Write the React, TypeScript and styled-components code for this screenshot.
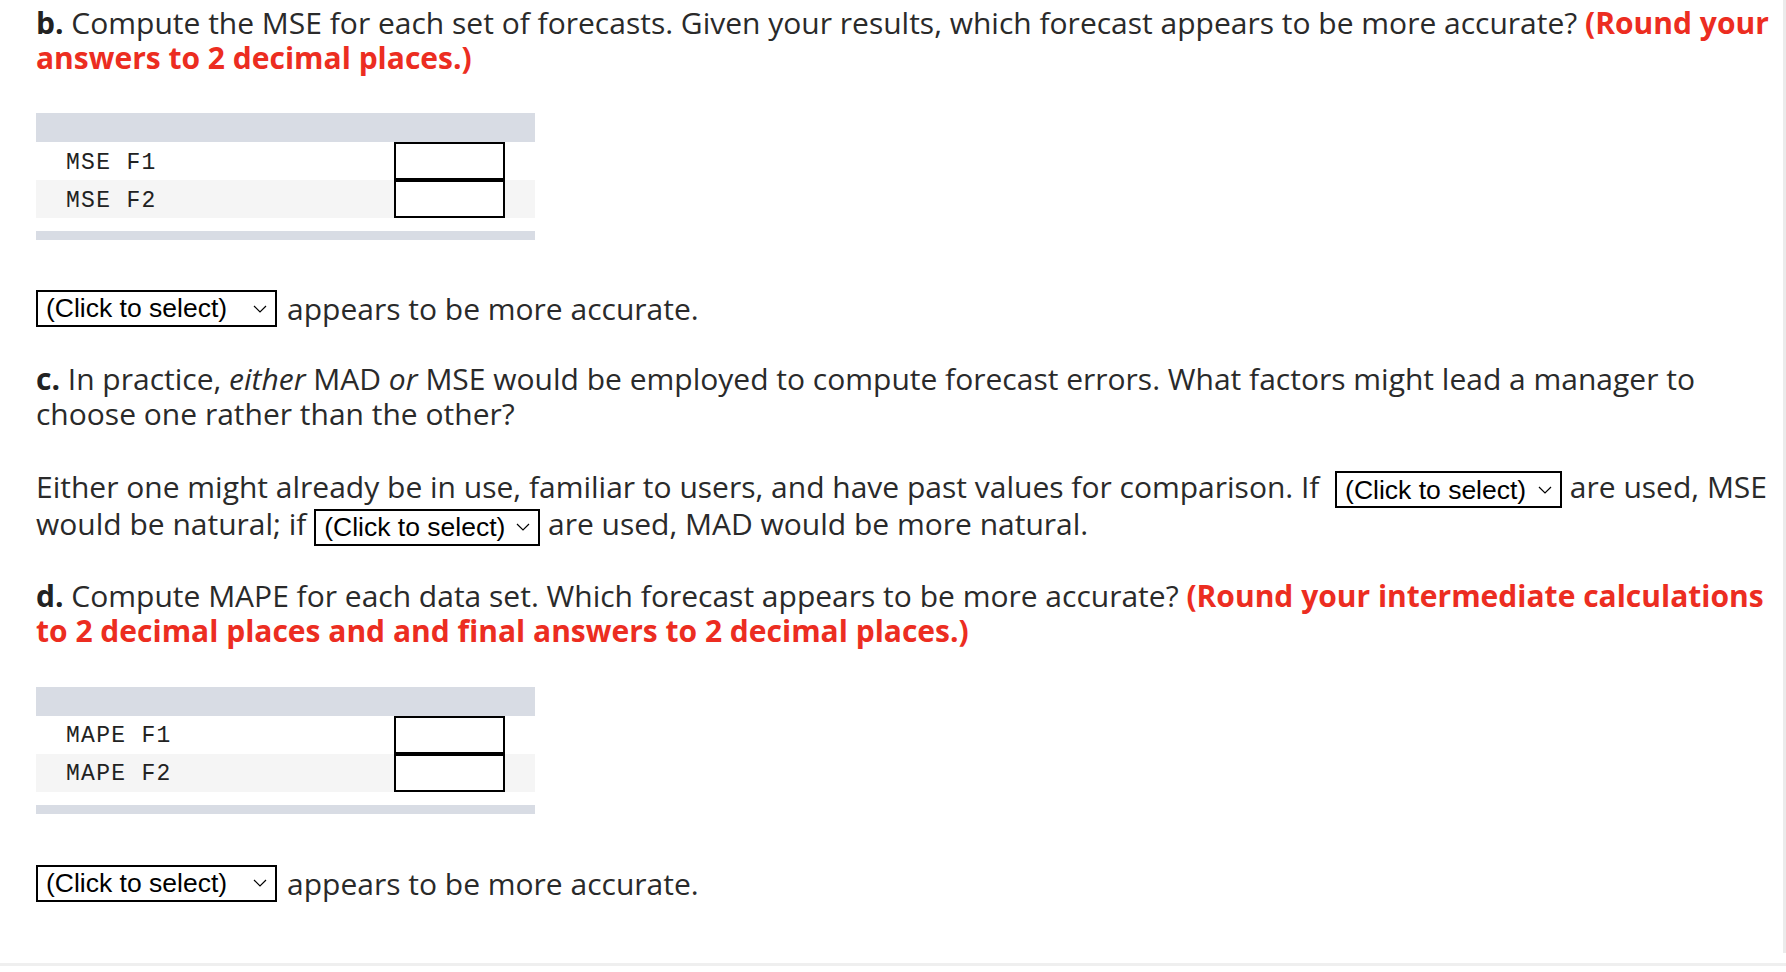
import React from 'react';
import styled, {createGlobalStyle} from 'styled-components';

const GlobalStyle = createGlobalStyle`
  html, body {
    margin: 0;
    padding: 0;
    background: #fff;
  }
  body {
    font-family: "Open Sans", Lato, sans-serif;
    color: #2a2a2a;
  }
`

const Page = styled.div`
  width: 1786px;
  height: 972px;
  box-sizing: border-box;
  display: flex;
  flex-direction: column;
`
const Card = styled.div`
  height: 953px;
  width: 1786px;
  box-sizing: border-box;
  border-right: 3px solid #ebebeb;
  padding: 5px 0 0 36px;
`
const BottomRule = styled.div`
  margin-top: 10px;
  height: 3px;
  background: #efefef;
`
const Paragraph = styled.p<{$gap?: number, $tall?: boolean}>`
  margin: ${p => p.$gap || 0}px 0 0 0;
  font-size: 30px;
  line-height: ${p => p.$tall ? 37 : 35}px;
  white-space: nowrap;
`
const Letter = styled.b`
  font-weight: 700;
  color: #222;
`
const Warn = styled.span`
  font-weight: 700;
  color: #ec2d21;
`
const ResultTable = styled.div<{$gap: number}>`
  width: 499px;
  margin-top: ${p => p.$gap}px;
`
const TableHead = styled.div`
  height: 29px;
  background: #d8dce4;
`
const TableFoot = styled.div`
  height: 9px;
  margin-top: 13px;
  background: #d8dce4;
`
const TableRow = styled.div<{$alt?: boolean}>`
  display: flex;
  align-items: center;
  justify-content: space-between;
  height: 38px;
  padding: 0 30px;
  background: ${p => p.$alt ? '#f5f5f5' : '#fff'};
`
const RowLabel = styled.span`
  padding-top: 3px;
  font-family: "Liberation Mono", monospace;
  font-size: 23px;
  letter-spacing: 1.3px;
  color: #222;
`
const AnswerBox = styled.div`
  width: 111px;
  height: 38px;
  box-sizing: border-box;
  border: 2px solid #000;
  background: #fff;
`
const SelectRow = styled.div<{$gap: number}>`
  display: flex;
  align-items: center;
  gap: 10px;
  margin-top: ${p => p.$gap}px;
  font-size: 30px;
  line-height: 35px;
`
const Select = styled.span<{$width: number}>`
  display: inline-flex;
  align-items: center;
  justify-content: space-between;
  box-sizing: border-box;
  width: ${p => p.$width}px;
  height: 37px;
  margin: -3px 0;
  padding: 0 8px 0 8px;
  border: 2px solid #000;
  background: #fff;
  vertical-align: middle;
  font-family: "Liberation Sans", Arial, sans-serif;
  font-size: 26.5px;
  color: #000;
  line-height: 1;
`
const Chevron = () => (
    <svg width="14" height="8" viewBox="0 0 14 8">
        <path d="M1 1 L7 7 L13 1" fill="none" stroke="#000" strokeWidth="1.2"/>
    </svg>
)

const Dropdown = ({width}: {width: number}) => (
    <Select $width={width}>
        <span>(Click to select)</span>
        <Chevron/>
    </Select>
)

const Results = ({names, gap}: {names: string[], gap: number}) => (
    <ResultTable $gap={gap}>
        <TableHead/>
        {names.map((name, i) => (
            <TableRow key={name} $alt={i % 2 === 1}>
                <RowLabel>{name}</RowLabel>
                <AnswerBox/>
            </TableRow>
        ))}
        <TableFoot/>
    </ResultTable>
)

const App = () => {
    return (
        <Page>
            <GlobalStyle/>
            <Card>
                <Paragraph>
                    <Letter>b.</Letter> Compute the MSE for each set of forecasts. Given your results, which forecast appears to be more accurate? <Warn>(Round your</Warn>
                    <br/>
                    <Warn>answers to 2 decimal places.)</Warn>
                </Paragraph>
                <Results names={['MSE F1', 'MSE F2']} gap={38}/>
                <SelectRow $gap={51}>
                    <Dropdown width={241}/>
                    <span>appears to be more accurate.</span>
                </SelectRow>
                <Paragraph $gap={35}>
                    <Letter>c.</Letter> In practice, <i>either</i> MAD <i>or</i> MSE would be employed to compute forecast errors. What factors might lead a manager to
                    <br/>
                    choose one rather than the other?
                </Paragraph>
                <Paragraph $gap={37} $tall>
                    Either one might already be in use, familiar to users, and have past values for comparison. If &nbsp;<Dropdown width={227}/> are used, MSE
                    <br/>
                    would be natural; if <Dropdown width={226}/> are used, MAD would be more natural.
                </Paragraph>
                <Paragraph $gap={35}>
                    <Letter>d.</Letter> Compute MAPE for each data set. Which forecast appears to be more accurate? <Warn>(Round your intermediate calculations</Warn>
                    <br/>
                    <Warn>to 2 decimal places and and final answers to 2 decimal places.)</Warn>
                </Paragraph>
                <Results names={['MAPE F1', 'MAPE F2']} gap={39}/>
                <SelectRow $gap={52}>
                    <Dropdown width={241}/>
                    <span>appears to be more accurate.</span>
                </SelectRow>
            </Card>
            <BottomRule/>
        </Page>
    );
};

export default App;
